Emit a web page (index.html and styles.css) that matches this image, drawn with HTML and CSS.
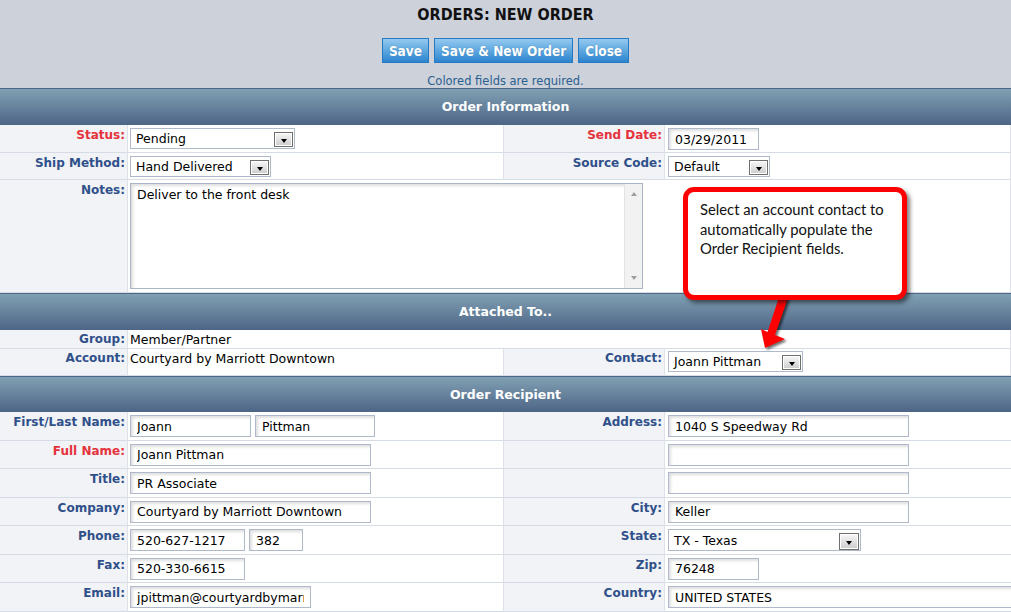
FILE: index.html
```html
<!DOCTYPE html>
<html>
  <head>
    <meta charset="UTF-8">
    <link rel="stylesheet" href="styles.css">
    <title>Orders: New Order</title>
  </head>
  <body>
    <div class="page">
      <div class="top">
        <h1>ORDERS: NEW ORDER</h1>
        <div class="buttons">
          <button>Save</button>
          <button>Save &amp; New Order</button>
          <button>Close</button>
        </div>
        <p class="note">Colored fields are required.</p>
      </div>

      <div class="section-head">Order Information</div>
      <div class="fields">
        <div class="lbl req">Status:</div>
        <div class="val"><div class="select sel-status"><span>Pending</span><i class="drop"></i></div></div>
        <div class="lbl req">Send Date:</div>
        <div class="val r"><input type="text" class="inp-date" value="03/29/2011"></div>

        <div class="lbl">Ship Method:</div>
        <div class="val"><div class="select sel-ship"><span>Hand Delivered</span><i class="drop"></i></div></div>
        <div class="lbl">Source Code:</div>
        <div class="val r"><div class="select sel-source"><span>Default</span><i class="drop"></i></div></div>

        <div class="lbl">Notes:</div>
        <div class="val span3 notes-cell">
          <div class="notes">
            <textarea>Deliver to the front desk</textarea>
            <div class="scroll"><i class="up"></i><i class="down"></i></div>
          </div>
        </div>
      </div>

      <div class="section-head">Attached To..</div>
      <div class="fields attached">
        <div class="lbl">Group:</div>
        <div class="val span3">Member/Partner</div>

        <div class="lbl">Account:</div>
        <div class="val">Courtyard by Marriott Downtown</div>
        <div class="lbl">Contact:</div>
        <div class="val r"><div class="select sel-contact"><span>Joann Pittman</span><i class="drop"></i></div></div>
      </div>

      <div class="section-head short">Order Recipient</div>
      <div class="fields recipient">
        <div class="lbl">First/Last Name:</div>
        <div class="val"><input type="text" class="inp-first" value="Joann"><input type="text" class="inp-last" value="Pittman"></div>
        <div class="lbl">Address:</div>
        <div class="val r"><input type="text" class="inp-long" value="1040 S Speedway Rd"></div>

        <div class="lbl req">Full Name:</div>
        <div class="val"><input type="text" class="inp-long" value="Joann Pittman"></div>
        <div class="lbl"></div>
        <div class="val r"><input type="text" class="inp-long" value=""></div>

        <div class="lbl">Title:</div>
        <div class="val"><input type="text" class="inp-long" value="PR Associate"></div>
        <div class="lbl"></div>
        <div class="val r"><input type="text" class="inp-long" value=""></div>

        <div class="lbl">Company:</div>
        <div class="val"><input type="text" class="inp-long" value="Courtyard by Marriott Downtown"></div>
        <div class="lbl">City:</div>
        <div class="val r"><input type="text" class="inp-long" value="Keller"></div>

        <div class="lbl">Phone:</div>
        <div class="val"><input type="text" class="inp-phone" value="520-627-1217"><input type="text" class="inp-ext" value="382"></div>
        <div class="lbl">State:</div>
        <div class="val r"><div class="select sel-state"><span>TX - Texas</span><i class="drop"></i></div></div>

        <div class="lbl">Fax:</div>
        <div class="val"><input type="text" class="inp-phone" value="520-330-6615"></div>
        <div class="lbl">Zip:</div>
        <div class="val r"><input type="text" class="inp-zip" value="76248"></div>

        <div class="lbl">Email:</div>
        <div class="val"><input type="text" class="inp-email" value="jpittman@courtyardbymarriott.com"></div>
        <div class="lbl">Country:</div>
        <div class="val r"><input type="text" class="inp-country" value="UNITED STATES"></div>
      </div>

      <!-- annotation over the form -->
      <svg class="arrow" width="50" height="62" viewBox="0 0 50 62">
        <polygon points="30,4 38,8 25,45 35,49 15,58 11,39 17.5,42" fill="#ff0000"/>
      </svg>
      <div class="callout">
        Select an account contact to automatically populate the Order Recipient fields.
      </div>
    </div>
  </body>
</html>
```

FILE: styles.css
```css
body {
    margin: 0;
    font-family: "DejaVu Sans", Verdana, sans-serif;
    background: #fff;
    overflow: hidden;
}

.page {
    position: relative;
    width: 1011px;
}

.top {
    background: #ccd1da;
    text-align: center;
    padding-top: 5px;
}

h1 {
    margin: 0;
    font-family: "DejaVu Sans Condensed", "DejaVu Sans", sans-serif;
    font-size: 16px;
    line-height: 19px;
    color: #111;
}

.buttons {
    display: flex;
    justify-content: center;
    gap: 5px;
    margin-top: 14px;
}

button {
    height: 25px;
    padding: 0 6px;
    border: 1px solid #2479c2;
    background: linear-gradient(#95c9ef, #5ea8e0 50%, #2c84ce);
    color: #fff;
    font-family: "DejaVu Sans Condensed", "DejaVu Sans", sans-serif;
    font-weight: bold;
    font-size: 13.5px;
    text-shadow: 0 0 1px rgba(0, 40, 90, 0.4);
    cursor: pointer;
}

.note {
    margin: 11px 0 0;
    font-size: 11.5px;
    line-height: 14px;
    color: #2a5f8f;
}

.section-head {
    height: 36px;
    border-top: 1px solid #4f6688;
    background: linear-gradient(#80a0b3, #4d6586);
    color: #fff;
    font-weight: bold;
    font-size: 12.5px;
    line-height: 36px;
    text-align: center;
}

.section-head.short {
    height: 35px;
    line-height: 35px;
}

.fields {
    display: grid;
    grid-template-columns: 128px 376px 161px 1fr;
}

.fields > div {
    border-bottom: 1px solid #d6dce5;
    border-right: 1px solid #dde2ea;
}

.lbl {
    background: #f1f3f7;
    text-align: right;
    padding: 3px 2px 0 0;
    font-weight: bold;
    font-size: 12px;
    line-height: 15px;
    color: #30508a;
}

.lbl.req {
    color: #e5323c;
}

.val {
    display: flex;
    gap: 4px;
    align-items: flex-start;
    padding: 3px 2px 2px;
    font-size: 12.5px;
    line-height: 15px;
    color: #000;
}

.val.r {
    padding-left: 3px;
}

.span3 {
    grid-column: span 3;
}

.notes-cell {
    padding-bottom: 3px;
}

.attached .lbl,
.attached .val {
    padding-top: 2px;
    padding-bottom: 1px;
}

.attached .sel-contact {
    margin-bottom: 2px;
}

.recipient .val {
    padding-bottom: 2.5px;
}

input[type="text"] {
    box-sizing: border-box;
    height: 22px;
    margin: 0;
    padding: 0 6px;
    border: 1px solid #aebacb;
    background: #fff;
    box-shadow: inset 2px 2px 3px rgba(0, 0, 0, 0.13);
    font-family: "DejaVu Sans", Verdana, sans-serif;
    font-size: 12.5px;
    color: #000;
}

.inp-date { width: 91px; }
.inp-first { width: 121px; }
.inp-last { width: 120px; }
.inp-long { width: 241px; }
.inp-phone { width: 115px; }
.inp-ext { width: 54px; }
.inp-email { width: 181px; padding-right: 0; }
.inp-zip { width: 91px; }
.inp-country { width: 360px; flex: none; }

.select {
    box-sizing: border-box;
    height: 21px;
    display: flex;
    align-items: center;
    justify-content: space-between;
    padding: 0 1px 0 5px;
    border: 1px solid #aebacb;
    background: #fff;
}

.drop {
    box-sizing: border-box;
    width: 19px;
    height: 15px;
    margin-top: 2px;
    border: 1px solid #6f6f6f;
    box-shadow: inset 0 0 0 1px #fff;
    background: linear-gradient(#f8f8f8, #cccccc);
    display: flex;
    align-items: center;
    justify-content: center;
    padding-top: 3px;
}

.drop::after {
    content: "";
    border-left: 3.5px solid transparent;
    border-right: 3.5px solid transparent;
    border-top: 4px solid #000;
}

.sel-status { width: 165px; }
.sel-ship { width: 141px; }
.sel-source { width: 102px; }
.sel-contact { width: 135px; }

.sel-state {
    width: 193px;
    height: 22px;
}

.sel-state .drop {
    width: 20px;
    height: 17px;
}

.notes {
    box-sizing: border-box;
    display: flex;
    width: 513px;
    height: 106px;
    border: 1px solid #a9b5c5;
    box-shadow: inset 2px 2px 3px rgba(0, 0, 0, 0.13);
}

.notes textarea {
    flex: 1;
    border: 0;
    margin: 0;
    padding: 3px 6px;
    resize: none;
    overflow: hidden;
    background: transparent;
    font-family: "DejaVu Sans", Verdana, sans-serif;
    font-size: 12.5px;
    line-height: 15px;
    color: #000;
}

.scroll {
    width: 17px;
    background: #f2f2f2;
    border-left: 1px solid #e2e2e2;
    display: flex;
    flex-direction: column;
    justify-content: space-between;
    align-items: center;
    padding: 8px 0 8px;
}

.scroll i {
    border-left: 3.5px solid transparent;
    border-right: 3.5px solid transparent;
}

.scroll .up {
    border-bottom: 4px solid #a0a0a0;
}

.scroll .down {
    border-top: 4px solid #a0a0a0;
}

.arrow {
    position: absolute;
    left: 750px;
    top: 290px;
    filter: drop-shadow(2px 2px 1px rgba(0, 0, 0, 0.55));
}

.callout {
    position: absolute;
    left: 683px;
    top: 187px;
    box-sizing: border-box;
    width: 224px;
    height: 113px;
    padding: 8px 8px 0 12px;
    border: 5px solid #ff0000;
    border-radius: 11px;
    background: #fff;
    box-shadow: 3px 3px 4px rgba(0, 0, 0, 0.5);
    font-family: Lato, "Open Sans", sans-serif;
    font-size: 14.8px;
    line-height: 19.5px;
    color: #111;
}
```
